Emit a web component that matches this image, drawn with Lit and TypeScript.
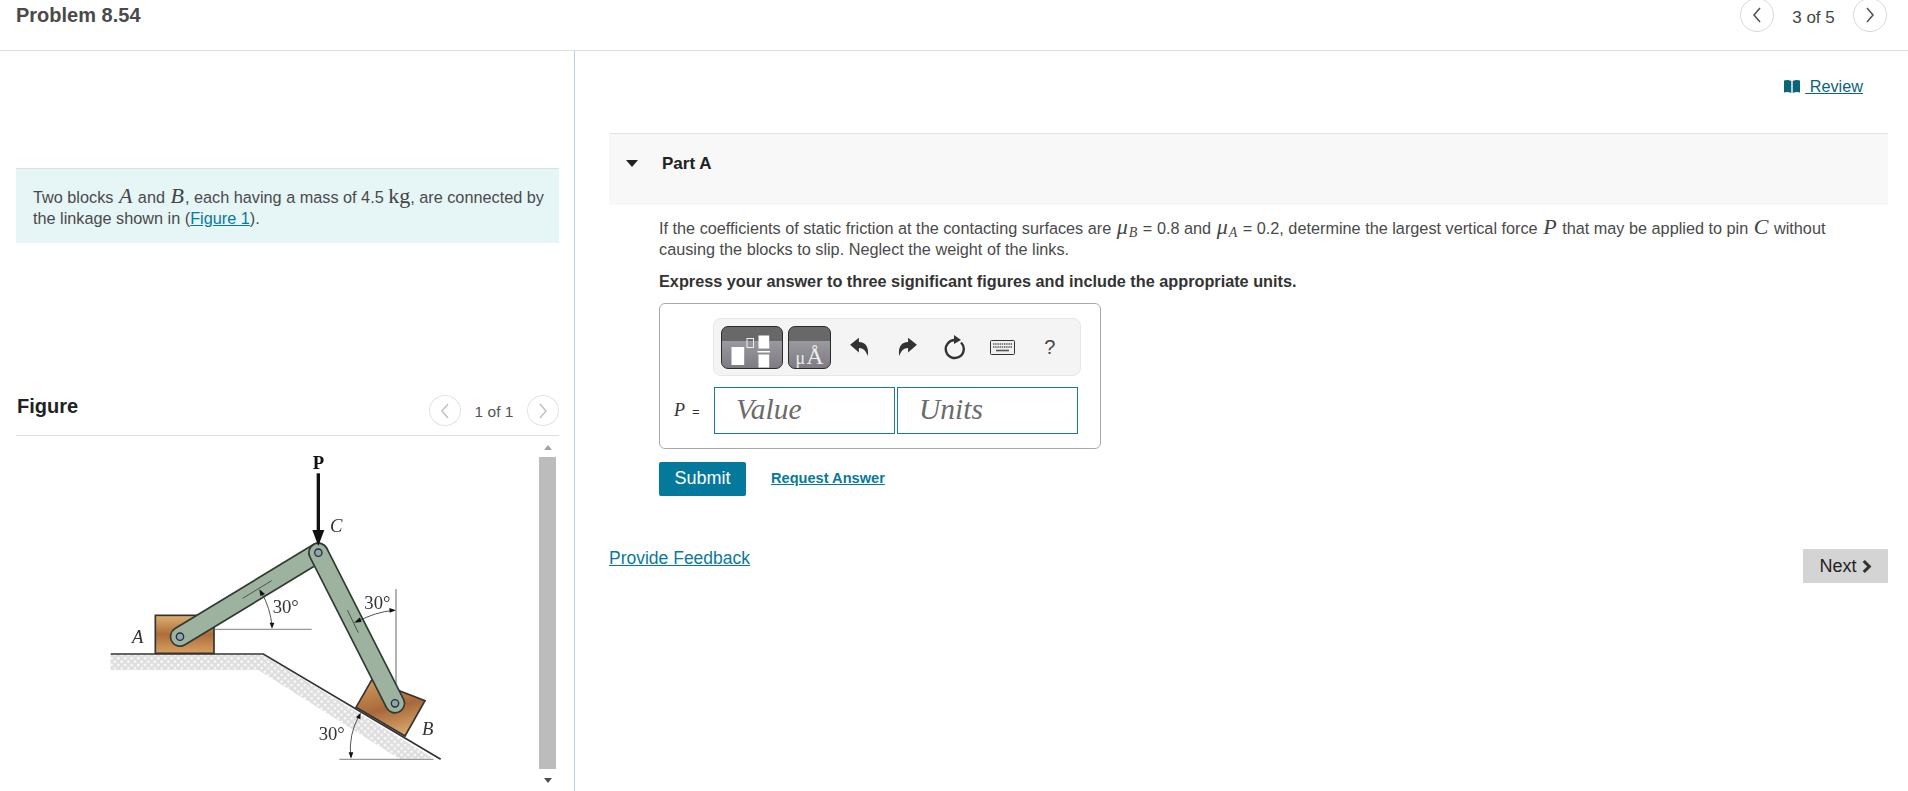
import { LitElement, html, css, svg } from 'lit';
import { customElement } from 'lit/decorators.js';

const chevron = (dir: 'l' | 'r') => html`<svg class="chev" viewBox="0 0 12 18" width="12" height="18">
  <polyline points=${dir === 'l' ? '9,2 3,9 9,16' : '3,2 9,9 3,16'} fill="none" stroke="currentColor" stroke-width="1.6"></polyline>
</svg>`;

// linkage drawing, coordinates are px*3 so the viewBox is 1050x1053
const figure = svg`
  <defs>
    <pattern id="grit" width="20" height="20" patternUnits="userSpaceOnUse">
      <rect width="20" height="20" fill="#dedede"></rect>
      <circle cx="5" cy="5" r="4" fill="#fafafa"></circle>
      <circle cx="15" cy="15" r="4" fill="#fafafa"></circle>
    </pattern>
    <linearGradient id="brownA" x1="0" y1="0" x2="0" y2="1">
      <stop offset="0" stop-color="#e0b070"></stop>
      <stop offset=".5" stop-color="#ad6e3c"></stop>
      <stop offset="1" stop-color="#d8a060"></stop>
    </linearGradient>
    <linearGradient id="brownB" x1=".35" y1="0" x2=".65" y2="1">
      <stop offset="0" stop-color="#cd9456"></stop>
      <stop offset=".5" stop-color="#a8693b"></stop>
      <stop offset="1" stop-color="#dcaa6c"></stop>
    </linearGradient>
    <filter id="soft"><feGaussianBlur stdDeviation="1"></feGaussianBlur></filter>
  </defs>
  <polygon points="32,645 490,645 1000,955 900,958 475,690 32,690" fill="url(#grit)" filter="url(#soft)"></polygon>
  <polyline points="32,642 490,642 1022,958" fill="none" stroke="#333" stroke-width="5"></polyline>

  <line x1="345" y1="568" x2="635" y2="568" stroke="#999" stroke-width="3.5"></line>
  <line x1="888" y1="447" x2="888" y2="735" stroke="#666" stroke-width="3"></line>
  <line x1="718" y1="958" x2="1000" y2="958" stroke="#999" stroke-width="3.5"></line>

  <rect x="166" y="526" width="176" height="114" fill="url(#brownA)" stroke="#333" stroke-width="5"></rect>
  <polygon points="768,802 915,888 975,782 815,720" fill="url(#brownB)" stroke="#333" stroke-width="5"></polygon>

  <line x1="240" y1="590" x2="655" y2="338" stroke="#2f3a33" stroke-width="62" stroke-linecap="round"></line>
  <line x1="240" y1="590" x2="655" y2="338" stroke="#9db39f" stroke-width="52" stroke-linecap="round"></line>
  <line x1="655" y1="338" x2="885" y2="790" stroke="#2f3a33" stroke-width="62" stroke-linecap="round"></line>
  <line x1="655" y1="338" x2="885" y2="790" stroke="#9db39f" stroke-width="52" stroke-linecap="round"></line>

  <circle cx="240" cy="590" r="11" fill="#8fa5b5" stroke="#2a2f33" stroke-width="4"></circle>
  <circle cx="655" cy="338" r="11" fill="#8fa5b5" stroke="#2a2f33" stroke-width="4"></circle>
  <circle cx="885" cy="790" r="11" fill="#8fa5b5" stroke="#2a2f33" stroke-width="4"></circle>

  <line x1="428" y1="475" x2="515" y2="422" stroke="#4a554d" stroke-width="3"></line>
  <line x1="742" y1="510" x2="775" y2="578" stroke="#4a554d" stroke-width="3"></line>

  <path d="M483 455 Q512 505 516 560" fill="none" stroke="#333" stroke-width="2.5"></path>
  <polygon points="478,448 495,462 481,468" fill="#111"></polygon>
  <polygon points="516,566 509,548 523,548" fill="#111"></polygon>
  <path d="M772 545 Q825 516 882 511" fill="none" stroke="#333" stroke-width="2.5"></path>
  <polygon points="762,548 780,532 784,546" fill="#111"></polygon>
  <polygon points="888,511 868,504 869,518" fill="#111"></polygon>
  <path d="M778 825 Q745 885 752 950" fill="none" stroke="#333" stroke-width="2.5"></path>
  <polygon points="782,818 781,838 768,832" fill="#111"></polygon>
  <polygon points="753,956 746,937 760,937" fill="#111"></polygon>

  <rect x="650" y="100" width="10" height="180" fill="#111"></rect>
  <polygon points="637,270 673,270 655,318" fill="#111"></polygon>

  <g font-family="'Liberation Serif', serif" fill="#333" font-size="56">
    <text x="638" y="86" font-weight="700" fill="#111">P</text>
    <text x="690" y="276" font-style="italic">C</text>
    <text x="96" y="610" font-style="italic">A</text>
    <text x="966" y="886" font-style="italic">B</text>
    <text x="518" y="518">30°</text>
    <text x="793" y="506">30°</text>
    <text x="656" y="900">30°</text>
  </g>
`;

@customElement('app-root')
export class AppRoot extends LitElement {
  static styles = css`
    :host {
      display: block;
      height: 791px;
      overflow: hidden;
      background: #fff;
      font-family: 'Liberation Sans', Arial, sans-serif;
      font-size: 16.25px;
      color: #4a4a4a;
    }

    a {
      color: #077a9b;
      text-decoration: underline;
    }

    .topbar {
      height: 50px;
      border-bottom: 1px solid #dedede;
      display: flex;
      justify-content: space-between;
      align-items: flex-start;
      padding: 0 21px 0 16px;
    }

    .title {
      font-size: 20px;
      font-weight: 700;
      line-height: 30px;
    }

    .pager {
      display: flex;
      align-items: flex-start;
      margin-top: -2px;
    }

    .pager .count {
      font-size: 17px;
      width: 79px;
      text-align: center;
      color: #444;
      line-height: 20px;
      padding-top: 10px;
    }

    .round {
      width: 34px;
      height: 34px;
      box-sizing: border-box;
      border: 1px solid #d8d8d8;
      border-radius: 50%;
      display: flex;
      align-items: center;
      justify-content: center;
      color: #555;
    }

    .main {
      display: grid;
      grid-template-columns: 574px 1fr;
      height: 740px;
    }

    .left {
      border-right: 1px solid #bccde3;
      padding-left: 16px;
      width: 543px;
      padding-right: 15px;
      box-sizing: content-box;
    }

    .intro {
      margin-top: 117px;
      height: 75px;
      box-sizing: border-box;
      background: #e6f5f6;
      border-top: 1px solid #d9e0e1;
      padding: 18px 10px 0 17px;
      line-height: 20.5px;
    }

    .m {
      font-family: 'Liberation Serif', serif;
      font-style: italic;
      font-size: 22px;
      line-height: 0;
      margin: 0 1px;
      color: #444;
    }

    .kg {
      font-style: normal;
      margin: 0;
    }

    .fig-head {
      margin-top: 151px;
      height: 41px;
      border-bottom: 1px solid #dedede;
      display: flex;
      justify-content: space-between;
      align-items: flex-start;
    }

    .fig-head h2 {
      margin: 0 0 0 1px;
      font-size: 20px;
      line-height: 24px;
      color: #222;
    }

    .fig-pager {
      display: flex;
      align-items: center;
      margin-top: 1px;
    }

    .fig-pager .count {
      font-size: 15.5px;
      width: 66px;
      text-align: center;
      color: #555;
      padding-top: 3px;
    }

    .fig-pager .round {
      width: 32px;
      height: 31px;
      border-color: #e4e4e4;
      color: #c4c4c4;
    }

    .fig-body {
      display: flex;
      justify-content: space-between;
      padding-right: 3px;
      height: 355px;
    }

    .drawing {
      padding: 4px 0 0 84px;
    }

    .drawing svg {
      display: block;
      filter: blur(0.5px);
    }

    .bar {
      width: 17px;
      display: flex;
      flex-direction: column;
      align-items: center;
      padding-top: 9px;
      box-sizing: border-box;
    }

    .bar .up {
      border: 4px solid transparent;
      border-top: 0;
      border-bottom: 5px solid #a3a3a3;
    }

    .bar .down {
      border: 4px solid transparent;
      border-bottom: 0;
      border-top: 5px solid #505050;
      margin-top: 9px;
    }

    .bar .thumb {
      width: 17px;
      height: 312px;
      margin-top: 7px;
      background: #bcbcbc;
    }

    .right {
      padding: 0 20px 0 35px;
    }

    .review-row {
      height: 82px;
      display: flex;
      justify-content: flex-end;
      align-items: center;
      padding: 0 25px 12px 0;
      box-sizing: border-box;
    }

    .review-row a {
      margin-left: 5px;
      color: #0b6478;
    }

    .part {
      height: 72px;
      box-sizing: border-box;
      background: #f8f8f8;
      border-top: 1px solid #e2e2e2;
      display: flex;
      align-items: flex-start;
      padding: 20px 0 0 17px;
    }

    .caret {
      margin-top: 6px;
      border: 6px solid transparent;
      border-bottom: 0;
      border-top: 7px solid #222;
    }

    .part h3 {
      margin: 0 0 0 24px;
      font-size: 17px;
      line-height: 20px;
      color: #222;
    }

    .body {
      padding: 13px 40px 0 50px;
      line-height: 21px;
    }

    .body p {
      margin: 0;
    }

    .body .sub {
      font-size: 14px;
      font-style: italic;
      font-family: 'Liberation Serif', serif;
      vertical-align: -3px;
      line-height: 0;
      margin-right: 1px;
    }

    .express {
      margin-top: 11px !important;
      font-weight: 700;
      color: #333;
    }

    .answer {
      margin-top: 11px;
      width: 442px;
      height: 146px;
      box-sizing: border-box;
      border: 1px solid #aaa;
      border-radius: 6px;
      padding: 14px 0 0 53px;
    }

    .tools {
      width: 368px;
      height: 58px;
      box-sizing: border-box;
      background: #f4f4f4;
      border: 1px solid #e6e6e6;
      border-radius: 8px;
      display: flex;
      align-items: center;
      padding-left: 7px;
    }

    .tool {
      height: 43px;
      box-sizing: border-box;
      border: 1px solid #2a2a2a;
      border-radius: 7px;
      background: linear-gradient(#686868 0 34%, #9b99a0 34%, #7e7c82 100%);
      overflow: hidden;
      flex: none;
    }

    .tool.tpl {
      width: 62px;
    }

    .tool.units {
      width: 43px;
      margin-left: 5px;
      margin-right: 5px;
      color: #eee;
      font-family: 'Liberation Serif', serif;
      display: flex;
      align-items: flex-end;
      justify-content: center;
      gap: 1px;
      font-size: 18px;
      line-height: 20px;
    }

    .tool.units b {
      font-weight: 400;
      font-size: 24px;
      line-height: 24px;
    }

    .tool svg {
      display: block;
    }

    .ico {
      width: 47.5px;
      display: flex;
      justify-content: center;
      flex: none;
    }

    .help {
      font-size: 20px;
      color: #444;
    }

    .inputs {
      margin-top: 11px;
      margin-left: -53px;
      display: flex;
      align-items: center;
    }

    .label {
      width: 54px;
      padding-left: 14px;
      box-sizing: border-box;
      font-size: 13px;
      color: #333;
    }

    .label i {
      font-family: 'Liberation Serif', serif;
      font-size: 18px;
      margin-right: 7px;
    }

    .field {
      width: 181px;
      height: 47px;
      box-sizing: border-box;
      border: 1px solid #1b7a97;
      padding-left: 21px;
      font-family: 'Liberation Serif', serif;
      font-style: italic;
      font-size: 29.5px;
      line-height: 43px;
      color: #6b6b6b;
    }

    .field + .field {
      margin-left: 2px;
    }

    .actions {
      margin-top: 13px;
      display: flex;
      align-items: center;
      gap: 25px;
    }

    .submit {
      width: 87px;
      height: 34px;
      padding-bottom: 2px;
      box-sizing: border-box;
      background: #04799c;
      color: #fff;
      border-radius: 2px;
      font-size: 18px;
      display: flex;
      align-items: center;
      justify-content: center;
    }

    .actions a {
      font-size: 14.6px;
      font-weight: 700;
      margin-bottom: 2px;
    }

    .foot {
      margin-top: 53px;
      display: flex;
      justify-content: space-between;
      align-items: flex-start;
    }

    .foot a {
      font-size: 17.5px;
      line-height: 18px;
    }

    .next {
      width: 85px;
      height: 34px;
      background: #d4d4d4;
      color: #222;
      font-size: 18px;
      display: flex;
      align-items: center;
      justify-content: center;
      gap: 4px;
    }
  `;

  render() {
    return html`
      <div class="topbar">
        <div class="title">Problem 8.54</div>
        <div class="pager">
          <div class="round">${chevron('l')}</div>
          <div class="count">3 of 5</div>
          <div class="round">${chevron('r')}</div>
        </div>
      </div>
      <div class="main">
        <div class="left">
          <div class="intro">
            Two blocks <span class="m">A</span> and <span class="m">B</span>, each having a mass of 4.5
            <span class="m kg">kg</span>, are connected by the linkage shown in (<a href="#">Figure 1</a>).
          </div>
          <div class="fig-head">
            <h2>Figure</h2>
            <div class="fig-pager">
              <div class="round">${chevron('l')}</div>
              <div class="count">1 of 1</div>
              <div class="round">${chevron('r')}</div>
            </div>
          </div>
          <div class="fig-body">
            <div class="drawing">
              <svg viewBox="0 0 1050 1053" width="350" height="351">${figure}</svg>
            </div>
            <div class="bar">
              <div class="up"></div>
              <div class="thumb"></div>
              <div class="down"></div>
            </div>
          </div>
        </div>
        <div class="right">
          <div class="review-row">
            <svg viewBox="0 0 16 13" width="16" height="13">
              <path d="M0 0.5 Q4 -0.5 7.3 1 V13 Q4 11.5 0 12.5 Z M16 0.5 Q12 -0.5 8.7 1 V13 Q12 11.5 16 12.5 Z" fill="#0b6478"></path>
            </svg>
            <a href="#">&nbsp;Review</a>
          </div>
          <div class="part">
            <div class="caret"></div>
            <h3>Part A</h3>
          </div>
          <div class="body">
            <p>
              If the coefficients of static friction at the contacting surfaces are
              <span class="m">μ</span><span class="sub">B</span> = 0.8 and
              <span class="m">μ</span><span class="sub">A</span> = 0.2, determine the largest vertical force
              <span class="m">P</span> that may be applied to pin <span class="m">C</span> without causing the
              blocks to slip. Neglect the weight of the links.
            </p>
            <p class="express">Express your answer to three significant figures and include the appropriate units.</p>
            <div class="answer">
              <div class="tools">
                <div class="tool tpl">
                  <svg viewBox="0 0 60 41" width="60" height="41">
                    <rect x="9.5" y="20" width="12.7" height="18" fill="#fff"></rect>
                    <rect x="25" y="11.5" width="6.5" height="9" fill="none" stroke="#eee"></rect>
                    <rect x="36.5" y="8.5" width="10.7" height="13" fill="#fff"></rect>
                    <rect x="35.5" y="24" width="12.5" height="1.5" fill="#fff"></rect>
                    <rect x="36.5" y="27.5" width="10.7" height="13" fill="#fff"></rect>
                  </svg>
                </div>
                <div class="tool units"><span>μ</span><b>Å</b></div>
                <div class="ico">
                  <svg viewBox="0 0 20 20" width="22" height="22">
                    <path d="M1 8 L9 1.5 V5.5 C15 5.5 18.5 10 17 18.5 C15.5 13.5 13 11 9 11 V15 Z" fill="#333"></path>
                  </svg>
                </div>
                <div class="ico">
                  <svg viewBox="0 0 20 20" width="22" height="22">
                    <path d="M19 8 L11 1.5 V5.5 C5 5.5 1.5 10 3 18.5 C4.5 13.5 7 11 11 11 V15 Z" fill="#333"></path>
                  </svg>
                </div>
                <div class="ico">
                  <svg viewBox="0 0 24 26" width="24" height="26">
                    <path d="M18 8.5 A9 9 0 1 1 12 6" fill="none" stroke="#333" stroke-width="2.4"></path>
                    <polygon points="11,1 18,6 11,10" fill="#333"></polygon>
                  </svg>
                </div>
                <div class="ico">
                  <svg viewBox="0 0 25 15" width="25" height="15">
                    <rect x="0.5" y="0.5" width="24" height="14" rx="1" fill="#f0f0f0" stroke="#333"></rect>
                    <line x1="3" y1="4" x2="22" y2="4" stroke="#555" stroke-width="1.4" stroke-dasharray="1.4 .8"></line>
                    <line x1="3" y1="7" x2="22" y2="7" stroke="#555" stroke-width="1.4" stroke-dasharray="1.4 .8"></line>
                    <line x1="6" y1="10.5" x2="19" y2="10.5" stroke="#555" stroke-width="1.6"></line>
                  </svg>
                </div>
                <div class="ico help">?</div>
              </div>
              <div class="inputs">
                <div class="label"><i>P</i>=</div>
                <div class="field">Value</div>
                <div class="field">Units</div>
              </div>
            </div>
            <div class="actions">
              <div class="submit">Submit</div>
              <a href="#">Request Answer</a>
            </div>
          </div>
          <div class="foot">
            <a href="#">Provide Feedback</a>
            <div class="next">
              Next
              <svg viewBox="0 0 12 16" width="11" height="15">
                <polyline points="3,2 9,8 3,14" fill="none" stroke="#333" stroke-width="3.4"></polyline>
              </svg>
            </div>
          </div>
        </div>
      </div>
    `;
  }
}
